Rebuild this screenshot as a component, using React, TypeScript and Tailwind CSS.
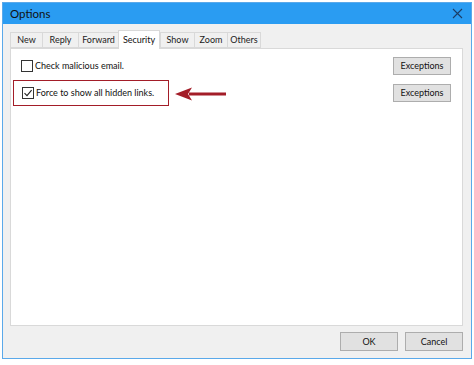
const tabs: [string, number][] = [
  ["New", 32],
  ["Reply", 36],
  ["Forward", 40],
  ["Security", 42],
  ["Show", 34],
  ["Zoom", 33],
  ["Others", 34],
];

function Checkbox({ checked }: { checked?: boolean }) {
  return (
    <span className="w-[12px] h-[12px] border border-[#333] bg-white flex items-center justify-center shrink-0">
      {checked && (
        <svg width="10" height="10" viewBox="0 0 10 10">
          <path d="M1.5 5.2 L4 7.6 L8.6 2.2" stroke="#222" strokeWidth="1.1" fill="none" />
        </svg>
      )}
    </span>
  );
}

function WinButton({ label, className }: { label: string; className: string }) {
  return (
    <button className={`bg-[#e1e1e1] border border-[#adadad] text-[9px] text-[#111] flex items-center justify-center ${className}`}>
      {label}
    </button>
  );
}

export default function App() {
  return (
    <div
      className="w-[474px] h-[365px] bg-white pt-[2px] pl-[2px]"
      style={{ fontFamily: 'Lato, "Noto Sans", sans-serif' }}
    >
      <div className="w-[470px] h-[357px] border border-[#5aa9ea] bg-[#f0f0f0] flex flex-col">
        {/* title bar */}
        <div className="h-[21px] bg-[#2a9cf2] flex items-center justify-between pl-[7px] pr-[8px]">
          <span className="text-[11.5px] text-[#111]">Options</span>
          <svg width="11" height="11" viewBox="0 0 11 11">
            <path d="M1 1 L10 10 M10 1 L1 10" stroke="#1b3d66" strokeWidth="1.1" />
          </svg>
        </div>

        <div className="pl-[7px] pr-[8px] pt-[6px] flex flex-col">
          {/* tabs */}
          <div className="flex items-end h-[18px]">
            {tabs.map(([t, w]) =>
              t === "Security" ? (
                <div
                  key={t}
                  style={{ width: w }}
                  className="h-[19px] -mb-px relative z-10 bg-white border border-[#d9d9d9] border-b-0 text-[9px] text-[#111] flex justify-center pt-[2px]"
                >
                  {t}
                </div>
              ) : (
                <div
                  key={t}
                  style={{ width: w }}
                  className="h-[16px] bg-[#f0f0f0] border border-[#d9d9d9] border-r-0 last:border-r text-[9px] text-[#222] flex items-center justify-center"
                >
                  {t}
                </div>
              )
            )}
          </div>

          {/* panel */}
          <div className="relative h-[278px] bg-white border border-[#d9d9d9] pl-[2px] pr-[11px] pt-[8px] flex flex-col gap-[5px]">
            <div className="flex items-center justify-between h-[18px]">
              <div className="flex items-center gap-[2px] pl-[8px]">
                <Checkbox />
                <span className="text-[9px] text-[#111] whitespace-nowrap">Check malicious email.</span>
              </div>
              <WinButton label="Exceptions" className="w-[58px] h-[18px]" />
            </div>
            <div className="flex items-center justify-between">
              <div className="flex items-center gap-[2px] pl-[8px] w-[156px] h-[26px] border border-[#a31d28]">
                <Checkbox checked />
                <span className="text-[9px] text-[#111] whitespace-nowrap">Force to show all hidden links.</span>
              </div>
              <WinButton label="Exceptions" className="w-[58px] h-[18px]" />
            </div>

            {/* annotation arrow */}
            <svg className="absolute left-[164px] top-[38px]" width="52" height="14" viewBox="0 0 52 14">
              <path d="M14 7 H51" stroke="#a31d28" strokeWidth="3" />
              <path d="M0 7 L17 0.5 L13 7 L17 13.5 Z" fill="#a31d28" />
            </svg>
          </div>

          {/* footer */}
          <div className="flex justify-end gap-[7px] mt-[6px]">
            <WinButton label="OK" className="w-[58px] h-[19px]" />
            <WinButton label="Cancel" className="w-[58px] h-[19px]" />
          </div>
        </div>
      </div>
    </div>
  );
}
